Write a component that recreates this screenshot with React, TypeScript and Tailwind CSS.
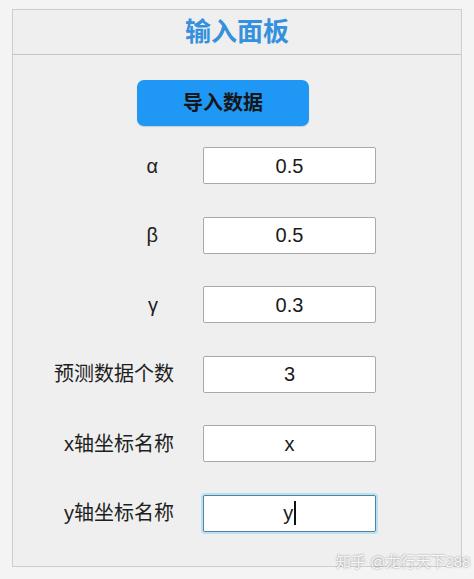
import React from "react";

const rows = [
    { label: "α", value: "0.5", greek: true },
    { label: "β", value: "0.5", greek: true },
    { label: "γ", value: "0.3", greek: true },
    { label: "预测数据个数", value: "3" },
    { label: "x轴坐标名称", value: "x" },
    { label: "y轴坐标名称", value: "y", focused: true },
];

export default function App() {
    return (
        <div
            className="relative w-[474px] h-[579px] bg-[#f4f4f4] pt-[9px] pl-[12px] overflow-hidden"
            style={{ fontFamily: '"Liberation Sans", "Noto Sans CJK SC", sans-serif' }}
        >
            <div className="w-[450px] h-[558px] bg-[#efefef] border border-[#cdcdcd] flex flex-col">
                {/* header */}
                <div className="h-[45px] border-b border-[#c4c4c4] flex items-center justify-center">
                    <span className="text-[26px] font-bold text-[#3590dd] leading-none">输入面板</span>
                </div>

                {/* body */}
                <div className="flex flex-col pt-[25px]">
                    <button className="ml-[124px] w-[172px] h-[46px] rounded-[7px] bg-[#1e97f5] shadow-[0_1px_1px_rgba(0,0,0,0.15)] text-[20px] font-bold text-[#161616] flex items-center justify-center">
                        导入数据
                    </button>

                    <div className="flex flex-col gap-[32.5px] mt-[21px]">
                        {rows.map((row) => (
                            <div key={row.label} className="flex items-center h-[37px]">
                                <div
                                    className={`w-[161px] text-right text-[20px] text-[#1e1e1e] leading-none ${
                                        row.greek ? "pr-[16px]" : ""
                                    }`}
                                >
                                    {row.label}
                                </div>
                                <div
                                    className={`ml-[29px] w-[173px] h-[37px] bg-white rounded-[2px] flex items-center justify-center text-[20px] text-[#1a1a1a] ${
                                        row.focused
                                            ? "border border-[#5a7f9a] shadow-[0_0_0_2px_#b6e1f7]"
                                            : "border border-[#a9a9a9]"
                                    }`}
                                >
                                    <span>{row.value}</span>
                                    {row.focused && <span className="w-[1.5px] h-[24px] bg-[#111] ml-[1px]" />}
                                </div>
                            </div>
                        ))}
                    </div>
                </div>
            </div>

            {/* watermark */}
            <div className="absolute left-[336px] top-[551px] text-[15px] text-white/90 [text-shadow:0_0_2px_rgba(80,80,80,0.7)] whitespace-nowrap">
                知乎 @龙行天下288
            </div>
        </div>
    );
}
